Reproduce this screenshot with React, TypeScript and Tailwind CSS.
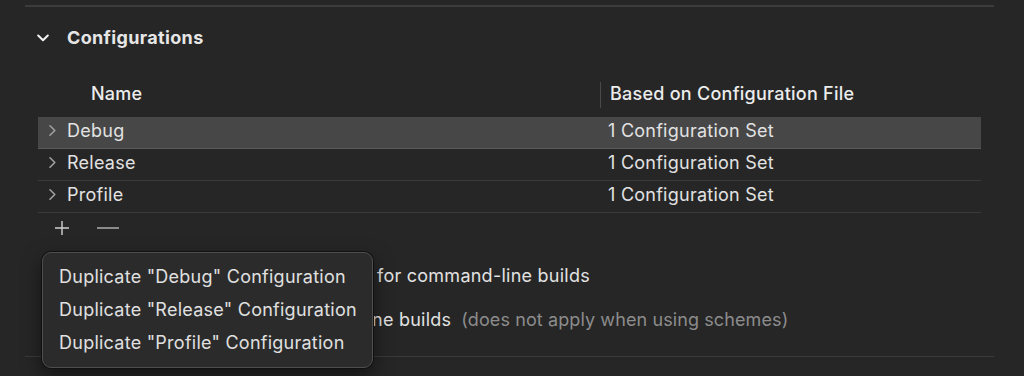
import React from "react";

const rows = ["Debug", "Release", "Profile"];

function ChevronRight() {
  return (
    <svg width="9" height="13" viewBox="0 0 9 13" className="shrink-0">
      <path d="M2 1.8 L6.8 6.5 L2 11.2" fill="none" stroke="#a0a0a0" strokeWidth="1.6" strokeLinecap="round" strokeLinejoin="round" />
    </svg>
  );
}

export default function App() {
  return (
    <div
      className="relative w-[1024px] h-[376px] overflow-hidden bg-[#262626] text-[#e2e2e2] tracking-[0.25px]"
      style={{ fontFamily: "Inter, 'Noto Sans', sans-serif" }}
    >
      <div className="pt-[5px]">
        <div className="ml-[25px] w-[969px] h-[1.5px] bg-[#3c3c3c]" />
        {/* heading */}
        <div className="flex items-center h-[28px] mt-[17px] pl-[37px]">
          <svg width="12" height="8" viewBox="0 0 12 8" className="shrink-0 mt-[1px]">
            <path d="M1.2 1.5 L6 6.2 L10.8 1.5" fill="none" stroke="#f2f2f2" strokeWidth="2" strokeLinecap="round" strokeLinejoin="round" />
          </svg>
          <span className="ml-[18px] text-[18px] font-bold text-[#e6e6e6] tracking-[0.35px]">Configurations</span>
        </div>
        {/* table */}
        <div className="ml-[38px] w-[943px] mt-[30px]">
          <div className="flex items-center h-[26px] text-[18px] font-medium text-[#ececec]">
            <div className="w-[562px] pl-[53px] pb-[2px]">Name</div>
            <div className="h-[26px] w-px bg-[#4a4a4a]" />
            <div className="pl-[9px] pb-[2px]">Based on Configuration File</div>
          </div>
          <div className="mt-[9px]">
            {rows.map((r, i) => (
              <div
                key={r}
                className={`flex items-center h-[32px] pb-[3px] border-b-[1.5px] text-[18px] ${
                  i === 0 ? "bg-[#474747] border-[#5a5a5a]" : "border-[#3a3a3a]"
                }`}
              >
                <div className="w-[570px] flex items-center pl-[10px]">
                  <ChevronRight />
                  <span className="ml-[10px]">{r}</span>
                </div>
                <div>1 Configuration Set</div>
              </div>
            ))}
          </div>
          {/* +/- */}
          <div className="flex items-center h-[30px] pl-[16px]">
            <svg width="16" height="16" viewBox="0 0 16 16">
              <path d="M8 1 V15 M1 8 H15" stroke="#d0d0d0" strokeWidth="1.4" />
            </svg>
            <svg width="22" height="4" viewBox="0 0 22 4" className="ml-[27px]">
              <path d="M0 2 H22" stroke="#b8b8b8" strokeWidth="1.4" />
            </svg>
          </div>
        </div>
        {/* options */}
        <div className="mt-[20px] flex items-center h-[26px] text-[18px] whitespace-nowrap">
          <div className="w-[377px] shrink-0" />
          <span>for command-line builds</span>
        </div>
        <div className="mt-[18px] flex items-center h-[26px] text-[18px] whitespace-nowrap">
          <div className="w-[372px] shrink-0" />
          <span>ne builds</span>
          <span className="ml-[10px] text-[#8c8c8c] tracking-[0.1px]">(does not apply when using schemes)</span>
        </div>
        <div className="mt-[23px] ml-[25px] w-[969px] h-[1.5px] bg-[#3a3a3a]" />
      </div>

      {/* popup menu */}
      <div className="absolute left-[42px] top-[252px] w-[331px] h-[116px] rounded-[9px] bg-[#2b2b2b] border border-[#4e4e4e] shadow-[0_0_0_1px_#111,0_8px_20px_rgba(0,0,0,0.5)] pt-[7px] text-[18px] text-[#e0e0e0]">
        {["Debug", "Release", "Profile"].map((n) => (
          <div key={n} className="h-[33px] flex items-center pl-[16px] whitespace-nowrap">
            Duplicate "{n}" Configuration
          </div>
        ))}
      </div>
    </div>
  );
}
